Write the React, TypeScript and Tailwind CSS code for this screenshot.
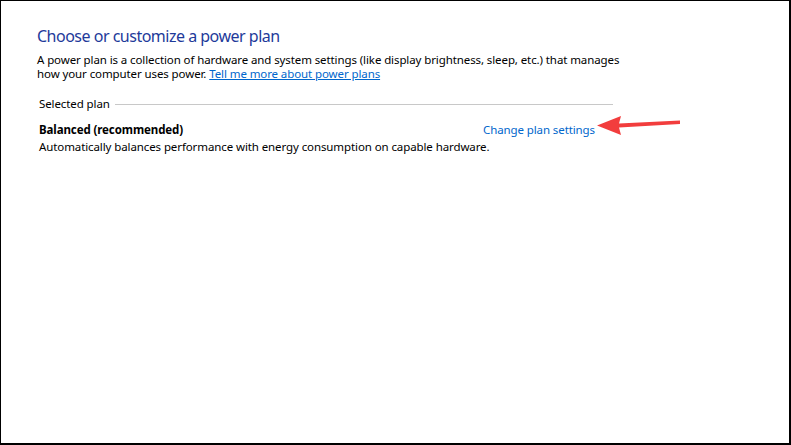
export default function App() {
  return (
    <div className="w-[791px] h-[445px] bg-white border border-black border-r-2 border-b-2 overflow-hidden font-['Noto_Sans',sans-serif] text-[11.5px] tracking-[-0.1px] text-black">
      <div className="pl-[36px] pt-[23px] w-[620px]">
        <h1 className="text-[16px] tracking-[-0.5px] leading-[24px] text-[#1e3a9a]">Choose or customize a power plan</h1>
        <p className="mt-[5px] leading-[14px] w-[586px]">
          A power plan is a collection of hardware and system settings (like display brightness, sleep, etc.) that manages how your computer uses power.{" "}
          <a className="text-[#0066cc] underline">Tell me more about power plans</a>
        </p>
        <div className="mt-[15px] flex items-center gap-[5px] pl-[2px] w-[576px]">
          <span className="leading-[16px]">Selected plan</span>
          <div className="flex-1 h-px bg-[#c8c8c8]" />
        </div>
        <div className="mt-[9px] pl-[2px] flex items-center justify-between w-[558px]">
          <span className="font-bold leading-[16px]">Balanced (recommended)</span>
          <div className="relative">
            <a className="text-[#0066cc] leading-[16px]">Change plan settings</a>
            <svg className="absolute left-[calc(100%+1px)] top-[-7px]" width="86" height="22" viewBox="0 0 86 22">
              <polygon points="1,11.5 25,2 23,9.5 84,6.5 84,10 23,13.5 25,21" fill="#f23d3d" />
            </svg>
          </div>
        </div>
        <p className="pl-[2px] leading-[16px] mt-[1px]">Automatically balances performance with energy consumption on capable hardware.</p>
      </div>
    </div>
  );
}
